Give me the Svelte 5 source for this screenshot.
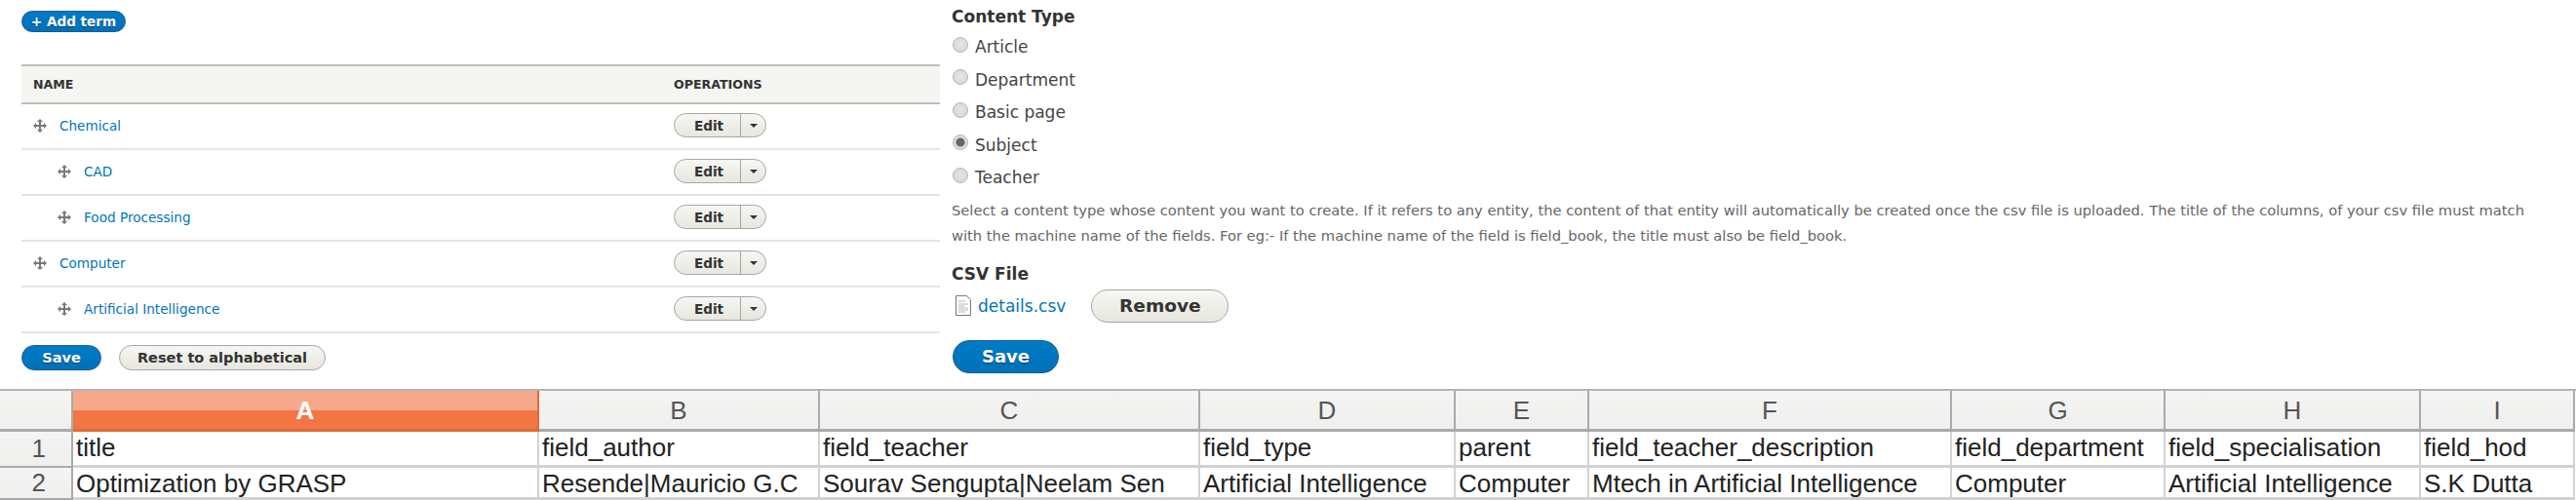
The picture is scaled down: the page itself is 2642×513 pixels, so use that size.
<script>
  const terms = [
    { name: 'Chemical', child: false },
    { name: 'CAD', child: true },
    { name: 'Food Processing', child: true },
    { name: 'Computer', child: false },
    { name: 'Artificial Intelligence', child: true },
  ];
  const types = ['Article', 'Department', 'Basic page', 'Subject', 'Teacher'];
  const columns = ['A', 'B', 'C', 'D', 'E', 'F', 'G', 'H', 'I'];
  const rows = [
    ['title', 'field_author', 'field_teacher', 'field_type', 'parent', 'field_teacher_description', 'field_department', 'field_specialisation', 'field_hod'],
    ['Optimization by GRASP', 'Resende|Mauricio G.C', 'Sourav Sengupta|Neelam Sen', 'Artificial Intelligence', 'Computer', 'Mtech in Artificial Intelligence', 'Computer', 'Artificial Intelligence', 'S.K Dutta'],
  ];
</script>

<div class="page">
  <div class="top">
    <section class="terms">
      <a class="btn primary add" href="#add">+ Add term</a>
      <div class="table">
        <div class="head row">
          <span class="name">NAME</span>
          <span class="ops">OPERATIONS</span>
        </div>
        {#each terms as term}
          <div class="row item">
            <span class="name" class:child={term.child}>
              <svg class="drag" viewBox="0 0 14 14" aria-hidden="true">
                <path d="M6 3h2v3h3V4l3 3-3 3V8H8v3h2l-3 3-3-3h2V8H3v2L0 7l3-3v2h3V3z M7 0l3 3H4z" fill="#787878" />
              </svg>
              <a href="#term">{term.name}</a>
            </span>
            <span class="ops">
              <span class="dropbutton">
                <span class="edit">Edit</span>
                <span class="toggle"><i></i></span>
              </span>
            </span>
          </div>
        {/each}
      </div>
      <div class="actions">
        <button class="btn primary save">Save</button>
        <button class="btn reset">Reset to alphabetical</button>
      </div>
    </section>

    <section class="form">
      <div class="label">Content Type</div>
      <div class="radios">
        {#each types as type}
          <label class="radio">
            <input type="radio" name="type" checked={type === 'Subject'} />
            <span>{type}</span>
          </label>
        {/each}
      </div>
      <p class="desc">Select a content type whose content you want to create. If it refers to any entity, the content of that entity will automatically be created once the csv file is uploaded. The title of the columns, of your csv file must match with the machine name of the fields. For eg:- If the machine name of the field is field_book, the title must also be field_book.</p>
      <div class="label csv">CSV File</div>
      <div class="file">
        <svg class="doc" viewBox="0 0 16 21" aria-hidden="true">
          <path d="M.5.5h11l4 4v16H.5z" fill="#fff" stroke="#777" />
          <path d="M3 6h7M3 9h10M3 11h6M3 13h10M3 15h10M3 17h7" stroke="#bbb" />
        </svg>
        <a href="#file">details.csv</a>
        <button class="btn remove">Remove</button>
      </div>
      <button class="btn primary submit">Save</button>
    </section>
  </div>

  <div class="sheet">
    <div class="corner"></div>
    {#each columns as col, i}
      <div class="colhead" class:active={i === 0}>{col}</div>
    {/each}
    {#each rows as cells, r}
      <div class="rowhead">{r + 1}</div>
      {#each cells as cell}
        <div class="cell">{cell}</div>
      {/each}
    {/each}
  </div>
</div>

<style>
  :global(body) {
    background: #fff;
    overflow: hidden;
  }

  .page {
    width: 2642px;
    height: 513px;
    font-family: "DejaVu Sans", sans-serif;
    color: #222330;
    overflow: hidden;
  }

  .top {
    display: flex;
    height: 400px;
  }

  a {
    color: #0074bd;
    text-decoration: none;
  }

  .btn {
    display: inline-flex;
    align-items: center;
    justify-content: center;
    box-sizing: border-box;
    border: 1px solid #a6a6a6;
    border-radius: 20px;
    background: linear-gradient(#f6f6f3, #e7e7df);
    color: #333;
    font-family: inherit;
    font-weight: 700;
    padding: 0;
  }

  .primary {
    border-color: #1e5c90;
    background: linear-gradient(#007bc6, #0071b8);
    color: #fff;
    text-shadow: 0 1px hsla(0, 0%, 0%, 0.5);
  }

  .terms {
    width: 942px;
    margin-left: 22px;
    padding-top: 11px;
  }

  .add {
    width: 107px;
    height: 22px;
    font-size: 13.6px;
  }

  .table {
    margin-top: 33px;
  }

  .row {
    display: flex;
    align-items: center;
    box-sizing: border-box;
    height: 47px;
    border-bottom: 2px solid #e6e4df;
    padding-left: 12px;
    font-size: 13.6px;
  }

  .head {
    height: 41px;
    border-top: 2px solid #bfbfba;
    border-bottom: 2px solid #bfbfba;
    background: #f5f5f2;
    color: #333;
    font-size: 12.6px;
    font-weight: 700;
  }

  .item {
    padding-bottom: 2px;
  }

  .name {
    display: flex;
    align-items: center;
    width: 657px;
    flex: none;
  }

  .name.child {
    padding-left: 25px;
    width: 632px;
  }

  .drag {
    width: 14px;
    height: 14px;
    margin-right: 13px;
  }

  .dropbutton {
    display: flex;
    box-sizing: border-box;
    width: 95px;
    height: 25px;
    border: 1px solid #a6a6a6;
    border-radius: 13px;
    background: linear-gradient(#f6f6f3, #e7e7df);
    font-size: 13.6px;
    font-weight: 700;
    color: #333;
  }

  .edit {
    display: flex;
    align-items: center;
    justify-content: center;
    box-sizing: border-box;
    width: 68px;
    border-right: 1px solid #a6a6a6;
    padding-left: 3px;
  }

  .toggle {
    display: flex;
    flex: 1;
    align-items: center;
    justify-content: center;
  }

  .toggle i {
    border: 4px solid transparent;
    border-top-color: #333;
    border-bottom-width: 0;
  }

  .actions {
    display: flex;
    gap: 18px;
    margin-top: 12px;
  }

  .save {
    width: 82px;
    height: 26px;
    font-size: 14.5px;
  }

  .reset {
    width: 212px;
    height: 26px;
    font-size: 14.5px;
  }

  .form {
    width: 1650px;
    margin-left: 12px;
    padding-top: 6px;
  }

  .label {
    color: #333;
    font-size: 17px;
    font-weight: 700;
    line-height: 22px;
  }

  .radios {
    display: flex;
    flex-direction: column;
    margin-top: 2px;
  }

  .radio {
    display: flex;
    align-items: center;
    gap: 7px;
    height: 33.5px;
    color: #444;
    font-size: 17px;
  }

  .radio span {
    padding-top: 3px;
  }

  .radio input {
    appearance: none;
    box-sizing: border-box;
    width: 16px;
    height: 16px;
    margin: 0 0 2px 1px;
    border: 1px solid #b5b5b5;
    border-radius: 50%;
    background: radial-gradient(circle at 50% 45%, #e4e4e4, #d4d4d4);
    flex: none;
  }

  .radio input:checked {
    background: radial-gradient(circle, #666 0 4px, #ddd 5px);
  }

  .desc {
    margin: 5px 0 0;
    width: 1640px;
    color: #666;
    font-size: 14.7px;
    line-height: 26px;
  }

  .csv {
    margin-top: 15px;
  }

  .file {
    display: flex;
    align-items: center;
    margin-top: 5px;
    padding-left: 4px;
    font-size: 17px;
  }

  .doc {
    width: 16px;
    height: 21px;
    margin-right: 7px;
  }

  .remove {
    width: 141px;
    height: 34px;
    margin-left: 26px;
    font-size: 18.5px;
  }

  .submit {
    width: 109px;
    height: 34px;
    margin-top: 18px;
    margin-left: 1px;
    font-size: 18px;
  }

  .sheet {
    display: grid;
    grid-template-columns: 75px 478px 288px 390px 262px 137px 372px 219px 262px 158px;
    grid-template-rows: 42px 37px 33px;
    border-top: 2px solid #b4b4b4;
    margin-top: -1px;
    font-family: "Liberation Sans", sans-serif;
    font-size: 26px;
    color: #222;
  }

  .corner,
  .colhead,
  .rowhead {
    box-sizing: border-box;
    border-right: 2px solid #aaa;
    border-bottom: 3px solid #aaa;
    background: linear-gradient(#f4f4f3, #efefed);
    color: #555;
  }

  .colhead {
    display: flex;
    align-items: center;
    justify-content: center;
    padding-top: 1px;
  }

  .colhead.active {
    border-color: #e0693a;
    background: linear-gradient(#f6a88b 0 51%, #f17644 51%);
    color: #fff;
    font-weight: 700;
  }

  .rowhead {
    display: flex;
    align-items: center;
    justify-content: flex-end;
    padding-right: 26px;
    border-bottom: 2px solid #aaa;
  }

  .cell {
    box-sizing: border-box;
    border-right: 2px solid #d2d2d2;
    border-bottom: 3px solid #d2d2d2;
    padding-left: 3px;
    line-height: 32px;
    white-space: nowrap;
    overflow: hidden;
    color: #222;
  }
</style>
